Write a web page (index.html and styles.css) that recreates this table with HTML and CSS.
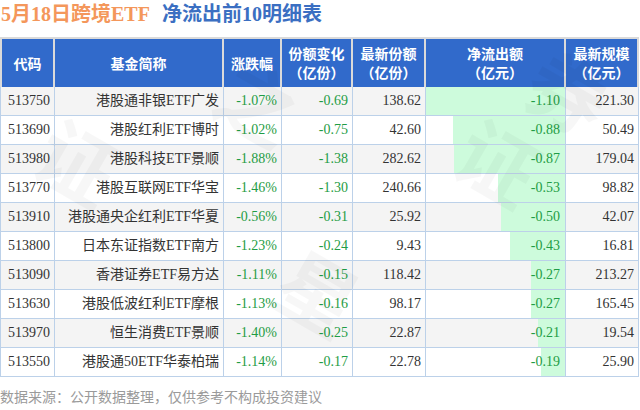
FILE: index.html
```html
<!DOCTYPE html>
<html lang="zh">
<head>
<meta charset="utf-8">
<link rel="stylesheet" href="styles.css">
</head>
<body>
<div class="page">
  <div class="title"><span class="t-orange">5月18日跨境ETF</span><span class="t-blue">净流出前10明细表</span></div>
  <table class="tbl">
    <colgroup>
      <col class="c1"><col class="c2"><col class="c3"><col class="c4"><col class="c5"><col class="c6"><col class="c7">
    </colgroup>
    <thead>
      <tr>
        <th>代码</th>
        <th>基金简称</th>
        <th>涨跌幅</th>
        <th>份额变化<br>（亿份）</th>
        <th>最新份额<br>（亿份）</th>
        <th>净流出额<br>（亿元）</th>
        <th>最新规模<br>（亿元）</th>
      </tr>
    </thead>
    <tbody>
      <tr><td>513750</td><td>港股通非银ETF广发</td><td class="g">-1.07%</td><td class="g">-0.69</td><td>138.62</td><td class="net"><div class="barrow"><div class="bar" style="width:140px">-1.10</div></div></td><td>221.30</td></tr>
      <tr><td>513690</td><td>港股红利ETF博时</td><td class="g">-1.02%</td><td class="g">-0.75</td><td>42.60</td><td class="net"><div class="barrow"><div class="bar" style="width:112px">-0.88</div></div></td><td>50.49</td></tr>
      <tr><td>513980</td><td>港股科技ETF景顺</td><td class="g">-1.88%</td><td class="g">-1.38</td><td>282.62</td><td class="net"><div class="barrow"><div class="bar" style="width:110.7px">-0.87</div></div></td><td>179.04</td></tr>
      <tr><td>513770</td><td>港股互联网ETF华宝</td><td class="g">-1.46%</td><td class="g">-1.30</td><td>240.66</td><td class="net"><div class="barrow"><div class="bar" style="width:67.5px">-0.53</div></div></td><td>98.82</td></tr>
      <tr><td>513910</td><td>港股通央企红利ETF华夏</td><td class="g">-0.56%</td><td class="g">-0.31</td><td>25.92</td><td class="net"><div class="barrow"><div class="bar" style="width:63.6px">-0.50</div></div></td><td>42.07</td></tr>
      <tr><td>513800</td><td>日本东证指数ETF南方</td><td class="g">-1.23%</td><td class="g">-0.24</td><td>9.43</td><td class="net"><div class="barrow"><div class="bar" style="width:54.7px">-0.43</div></div></td><td>16.81</td></tr>
      <tr><td>513090</td><td>香港证券ETF易方达</td><td class="g">-1.11%</td><td class="g">-0.15</td><td>118.42</td><td class="net"><div class="barrow"><div class="bar" style="width:34.4px">-0.27</div></div></td><td>213.27</td></tr>
      <tr><td>513630</td><td>港股低波红利ETF摩根</td><td class="g">-1.13%</td><td class="g">-0.16</td><td>98.17</td><td class="net"><div class="barrow"><div class="bar" style="width:34.4px">-0.27</div></div></td><td>165.45</td></tr>
      <tr><td>513970</td><td>恒生消费ETF景顺</td><td class="g">-1.40%</td><td class="g">-0.25</td><td>22.87</td><td class="net"><div class="barrow"><div class="bar" style="width:26.7px">-0.21</div></div></td><td>19.54</td></tr>
      <tr><td>513550</td><td>港股通50ETF华泰柏瑞</td><td class="g">-1.14%</td><td class="g">-0.17</td><td>22.78</td><td class="net"><div class="barrow"><div class="bar" style="width:24.2px">-0.19</div></div></td><td>25.90</td></tr>
    </tbody>
  </table>
  <div class="foot">数据来源：公开数据整理，仅供参考不构成投资建议</div>
  <div class="wm" aria-hidden="true">
    <span class="wm-a">证</span>
    <span class="wm-b">之</span>
    <span class="wm-c">星</span>
    <span class="wm-d">证</span>
    <span class="wm-e">券</span>
  </div>
</div>
</body>
</html>
```
FILE: styles.css
```css
html, body {
  margin: 0;
  padding: 0;
  background: #fff;
}
.page {
  position: relative;
  width: 640px;
  height: 410px;
  overflow: hidden;
  font-family: "Liberation Serif", "Noto Sans CJK SC", serif;
  color: #333;
}
.title {
  height: 37px;
  line-height: 28px;
  font-size: 20px;
  font-weight: bold;
  padding-left: 1px;
  display: flex;
  align-items: flex-start;
  white-space: nowrap;
}
.t-orange {
  color: #f4975b;
}
.t-blue {
  color: #3b6fc2;
  margin-left: 12px;
}
.tbl {
  border-collapse: separate;
  border-spacing: 0;
  table-layout: fixed;
  width: 639px;
  font-size: 14px;
}
.c1 { width: 55px; }
.c2 { width: 169px; }
.c3 { width: 58px; }
.c4 { width: 71px; }
.c5 { width: 73px; }
.c6 { width: 140px; }
.c7 { width: 73px; }
.tbl th {
  background: #316acb;
  color: #fff;
  font-family: "Noto Sans CJK SC", sans-serif;
  font-weight: bold;
  font-size: 14px;
  line-height: 19px;
  height: 50px;
  padding: 0;
  text-align: center;
  border-top: 2px solid #dadada;
  border-right: 2px solid #dadada;
  box-sizing: border-box;
}
.tbl th:first-child {
  border-left: 2px solid #dadada;
}
.tbl td {
  height: 29px;
  box-sizing: border-box;
  padding: 0 4px 0 0;
  text-align: right;
  white-space: nowrap;
  border-right: 1px solid #bcd1e9;
  border-bottom: 1px solid #bcd1e9;
  line-height: 28px;
}
.tbl td:first-child {
  border-left: 1px solid #bcd1e9;
}
.tbl tbody tr:nth-child(odd) td {
  background: #f4f4f4;
}
.tbl td.g {
  color: #1f9d45;
}
.tbl td.net {
  padding: 0;
  color: #1f9d45;
}
.barrow {
  display: flex;
  justify-content: flex-end;
  height: 28px;
}
.bar {
  box-sizing: border-box;
  background: #cdfbdc;
  display: flex;
  justify-content: flex-end;
  align-items: center;
  padding-right: 5px;
  white-space: nowrap;
}
.foot {
  font-family: "Noto Sans CJK SC", sans-serif;
  font-size: 14px;
  color: #9a9a9a;
  line-height: 20px;
  margin-top: 9px;
  white-space: nowrap;
}
.wm {
  position: absolute;
  inset: 0;
  pointer-events: none;
}
.wm span {
  position: absolute;
  font-family: "Noto Sans CJK SC", sans-serif;
  font-size: 80px;
  line-height: 80px;
  font-weight: bold;
  color: rgba(0, 0, 0, 0.03);
  transform: rotate(30deg);
}
.wm-a { left: 40px; top: 120px; }
.wm-b { left: 220px; top: 60px; }
.wm-c { left: 280px; top: 250px; }
.wm-d { left: 460px; top: 120px; }
.wm-e { left: 530px; top: 50px; }
```
